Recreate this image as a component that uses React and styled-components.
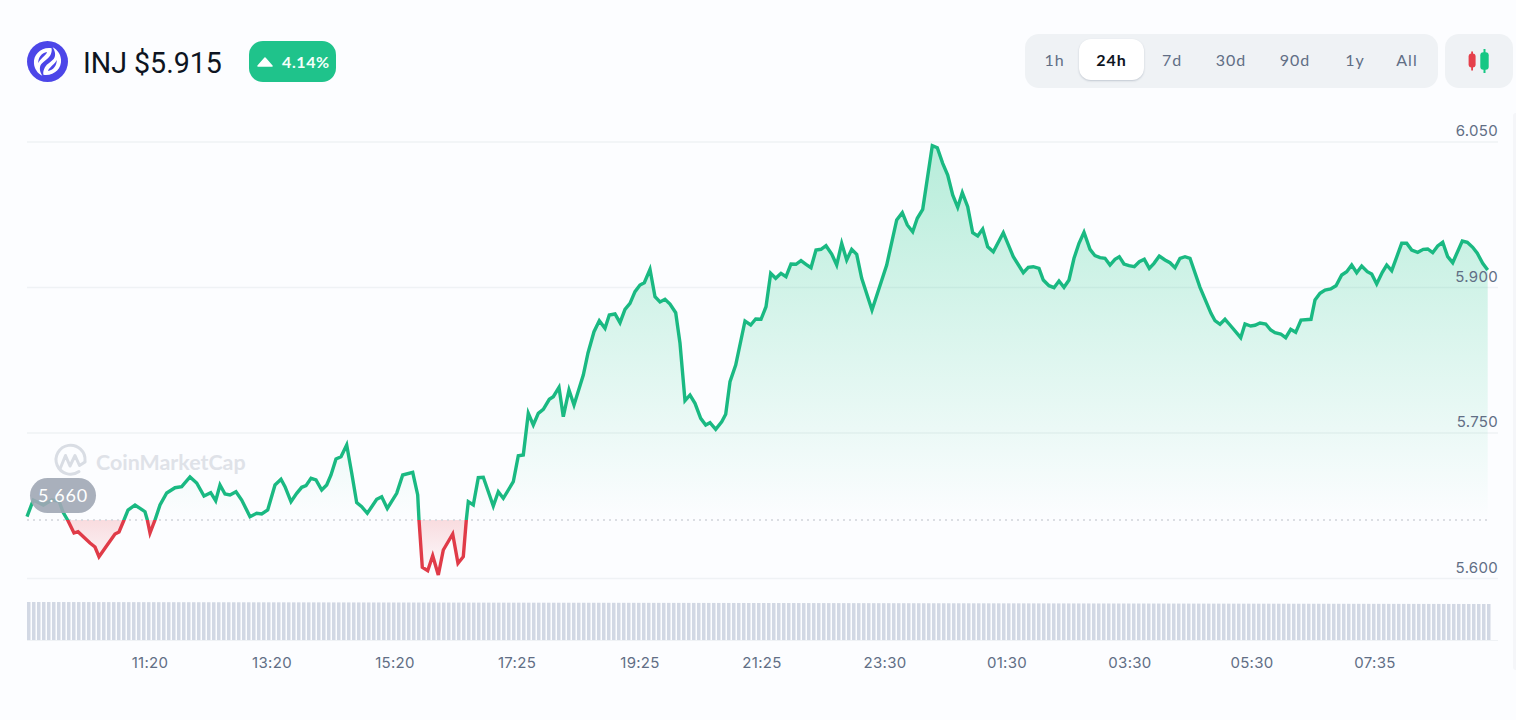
import React from "react";
import styled, { createGlobalStyle } from "styled-components";

const GlobalStyle = createGlobalStyle`
  body {
    margin: 0;
    background: #fcfdff;
    font-family: "Inter", "Liberation Sans", sans-serif;
  }
`;

// price line, traced from the chart (page coordinates)
const LINE = [
  [27, 516.7], [33.3, 500], [43.3, 505], [51.7, 500], [59, 501], [63, 512], [68, 520.7],
  [74, 533], [78, 531.7], [90, 543], [95, 547], [99, 556.7], [106, 546.7], [115, 534], [119, 532], [124, 520],
  [128, 510], [135, 505], [145, 511.7], [147.3, 520], [150, 533], [155, 520],
  [160, 505], [166.7, 493], [175, 487.7], [181.7, 486.7], [190, 477], [196.7, 483], [204, 496], [210.7, 492.7],
  [215.7, 500.7], [220, 485], [225, 494], [230, 495], [236, 491.7], [241.7, 500], [250, 516.7], [256.7, 513.3],
  [261.7, 514], [267.7, 510], [275, 485], [281, 479.3], [285, 486.7], [291, 501.7], [296.7, 493.3], [301.7, 487.3],
  [306, 485.7], [311, 478.3], [316, 480], [321.7, 490], [326.7, 485], [331, 475], [336, 459], [341, 456.7],
  [346.7, 445], [351.7, 473], [356.7, 502.7], [361.7, 506.7], [367.3, 513.3], [376.7, 499.3], [381.7, 496.7],
  [387.3, 508.5], [396.7, 493.3], [402.7, 475], [412.7, 472.3], [417.7, 495], [419, 520],
  [422.3, 567.3], [427.7, 570.7], [432.7, 555.7], [438.3, 575], [443.3, 550], [452.7, 534], [458, 563.3], [463.3, 556.7], [466.3, 520],
  [468.3, 501.7], [473.3, 505], [478.3, 477.7], [483.3, 477.3], [493.3, 506], [498.3, 491.7], [503.3, 498.3],
  [513.3, 481.7], [518.3, 455.7], [523.3, 455], [528.3, 413.3], [533.3, 425], [538.3, 413.3], [543.3, 409.3],
  [549.3, 399.3], [553.3, 396.7], [559, 387.3], [563.3, 416.7], [569, 390], [574, 405], [583.3, 375], [588, 353],
  [594, 331.7], [599.3, 320.7], [605, 328.3], [609.3, 315], [615, 314], [620, 322.7], [625, 309.3], [630, 303.3],
  [635, 291.7], [640, 285], [644.3, 282.7], [650, 269.3], [655, 296.7], [660, 302], [665, 299.3], [670, 304],
  [675.7, 312.7], [680, 343.3], [685, 400.7], [690, 395], [695, 403.3], [700.7, 418.3], [705.7, 425], [710, 422.7],
  [715.7, 429.3], [721.7, 421.7], [725.7, 414.3], [730, 381.7], [735.7, 365], [745, 321], [750.7, 325], [755.7, 319],
  [761, 319.3], [766, 306.7], [770.7, 273.3], [775.7, 278.3], [781, 273.3], [786, 276.7], [791, 264], [796, 264.3],
  [801, 260.7], [806, 264.3], [811, 267.7], [816, 250], [821, 249.3], [826, 245.7], [831.7, 254], [836.7, 265],
  [841.7, 243.3], [846.7, 260], [851.7, 249.3], [856.7, 254.3], [861.7, 278.3], [872, 310], [886.7, 265], [896.7, 220],
  [902.3, 212.7], [907.3, 225], [912.7, 231.7], [917.3, 218.3], [922.7, 209.3], [932.3, 145.7], [937.3, 147.7],
  [942.7, 163.3], [947.7, 175], [952.7, 195], [957.7, 207.3], [962.3, 192.7], [967.7, 206.7], [972.7, 232.7],
  [977.7, 236], [982.7, 229], [987.7, 246.7], [993.3, 251.7], [1003.3, 232.7], [1013.3, 256.7], [1023.3, 272.7],
  [1028.3, 267.3], [1033.3, 266.7], [1039, 268.3], [1043.3, 280], [1049, 285.7], [1054, 287.7], [1059, 281],
  [1064, 287.3], [1069, 280], [1074, 258.3], [1079, 243.3], [1084, 232.3], [1090, 249.3], [1095, 255.7], [1100, 257.7],
  [1105, 258.3], [1110, 265], [1115, 259.3], [1119.3, 256.7], [1124, 264], [1129, 265.7], [1134.3, 266.7], [1139.3, 261.7],
  [1144.3, 259.3], [1149.3, 268.3], [1154, 263.3], [1159.3, 256], [1165, 260], [1170, 262.7], [1175, 267.7], [1180, 258.3],
  [1185, 256.7], [1190, 258.3], [1200, 287.3], [1211, 313.3], [1215, 320.7], [1220, 324.3], [1225, 319.3], [1230, 325],
  [1240.7, 337.7], [1245, 324], [1250.7, 326], [1255, 325.3], [1260, 323], [1265.7, 324], [1270.7, 330], [1275, 332.7],
  [1280.7, 334], [1285.7, 337.7], [1290.7, 329.3], [1295.7, 332.3], [1301, 320], [1311, 319.3], [1315, 300], [1320, 293.3],
  [1325, 290], [1330.7, 289], [1336, 285.7], [1341.7, 275], [1346.7, 271.7], [1351.7, 265], [1356.7, 272.7], [1361.7, 266],
  [1367.3, 271.7], [1371.7, 274], [1376.7, 284], [1382.3, 272.3], [1386.7, 265], [1391.7, 270.7], [1401.7, 243.3],
  [1406.7, 243.3], [1411.7, 250], [1417.7, 252.3], [1423.3, 249.3], [1427.7, 249], [1432.7, 252.7], [1437.7, 246],
  [1442.7, 242.3], [1447.7, 256.7], [1452.7, 262.7], [1462.3, 241], [1467.3, 242.3], [1472.7, 247.3], [1477.3, 253.3],
  [1482.7, 263.3], [1487.7, 270],
];

const BASE = 520;
const linePoints = LINE.map((p) => p.join(",")).join(" ");
const areaPoints = `27,${BASE} ${linePoints} 1487.7,${BASE}`;

const SWOOSH =
  "M24 7C14 5.500 6 13 6.800 22 7.200 27 10 31.500 15 34 12.500 30 11.500 26 14 22.500 16.500 19.500 20.500 18 22.500 14.500 23.800 12 24.500 9.500 24 7zM19.500 10.800C14.500 11.500 10.800 16 11 21.500 12.500 18.500 15 16.500 17 14.500 18.300 13.200 19.200 12.200 19.500 10.800z";

const TABS = [
  { label: "1h", width: 49 },
  { label: "24h", width: 65, active: true },
  { label: "7d", width: 56 },
  { label: "30d", width: 62 },
  { label: "90d", width: 66 },
  { label: "1y", width: 54 },
  { label: "All", width: 50 },
];

const GRID = [
  { y: 142, label: "6.050" },
  { y: 287.5, label: "5.900" },
  { y: 433, label: "5.750" },
  { y: 578.5, label: "5.600" },
];

const TIMES = [
  [150, "11:20"], [272, "13:20"], [395, "15:20"], [517, "17:25"], [640, "19:25"], [762, "21:25"],
  [885, "23:30"], [1007, "01:30"], [1130, "03:30"], [1252, "05:30"], [1375, "07:35"],
];

const VOLUME = Array.from({ length: 293 }, (_, i) => 27 + i * 5);

const Page = styled.div`
  position: relative;
  width: 1516px;
  height: 720px;
  overflow: hidden;
  background: #fcfdff;
`;

const Header = styled.header`
  display: flex;
  justify-content: space-between;
  align-items: flex-start;
  padding: 34px 3px 0 27px;
`;

const Coin = styled.div`
  display: flex;
  align-items: center;
  margin-top: 7px;
`;

const Title = styled.h1`
  width: 139px;
  margin: 0 27px 0 15px;
  padding-top: 3px;
  font-family: "Roboto", "Liberation Sans", sans-serif;
  font-size: 28.6px;
  font-weight: 400;
  line-height: 38px;
  white-space: nowrap;
  color: #0d1421;
`;

const Badge = styled.div`
  display: flex;
  align-items: center;
  gap: 9px;
  width: 87px;
  height: 41px;
  box-sizing: border-box;
  padding-left: 8px;
  border-radius: 14px;
  background: #1fc38b;
  color: #f4fffa;
  font-family: "Lato", sans-serif;
  font-size: 16px;
  font-weight: 700;
  letter-spacing: 0.6px;
`;

const Controls = styled.div`
  display: flex;
  gap: 7px;
`;

const TabGroup = styled.div`
  display: flex;
  align-items: flex-start;
  height: 54px;
  box-sizing: border-box;
  padding: 5px 6px 0 5px;
  border-radius: 14px;
  background: #eff2f5;
`;

const Tab = styled.button`
  width: ${(p) => p.$width}px;
  height: 41px;
  padding: 0;
  border: none;
  border-radius: 12px;
  background: ${(p) => (p.$active ? "#fff" : "transparent")};
  box-shadow: ${(p) => (p.$active ? "0 1px 2px rgba(88,102,126,0.3)" : "none")};
  color: ${(p) => (p.$active ? "#0d1421" : "#616e85")};
  font-family: "Lato", sans-serif;
  font-size: 16px;
  font-weight: ${(p) => (p.$active ? 700 : 400)};
  letter-spacing: 1px;
`;

const CandleButton = styled.button`
  display: flex;
  align-items: center;
  justify-content: center;
  width: 68px;
  height: 54px;
  padding: 0;
  border: none;
  border-radius: 14px;
  background: #eff2f5;
`;

const Chart = styled.div`
  position: relative;
  margin-top: 22px;
`;

const ChartSvg = styled.svg`
  display: block;
  width: 1516px;
  height: 610px;
`;

const AxisText = styled.text`
  font-family: "Inter", sans-serif;
  font-size: 15px;
  letter-spacing: 0.3px;
  fill: #616e85;
`;

const Watermark = styled.text`
  font-family: "Lato", sans-serif;
  font-size: 21.4px;
  font-weight: 700;
  fill: #dfe2e8;
`;

const OpenPrice = styled.div`
  position: absolute;
  left: 30px;
  top: 368px;
  width: 66px;
  height: 35px;
  border-radius: 18px;
  background: rgba(160, 167, 181, 0.9);
  color: #fff;
  font-family: "Lato", sans-serif;
  font-size: 18px;
  line-height: 35px;
  letter-spacing: 0.8px;
  text-align: center;
`;

const EdgeCard = styled.div`
  position: absolute;
  right: 0;
  top: 113px;
  width: 3px;
  height: 557px;
  border-radius: 6px 0 0 6px;
  background: #f5f6f9;
`;

function InjLogo() {
  return (
    <svg width="41" height="41" viewBox="0 0 40 40">
      <circle cx="20" cy="20" r="20" fill="#4c46e8" />
      <path d={SWOOSH} fill="#fff" fillRule="evenodd" />
      <path d={SWOOSH} fill="#fff" fillRule="evenodd" transform="rotate(180 20 20)" />
    </svg>
  );
}

function CandleIcon() {
  return (
    <svg width="26" height="26" viewBox="0 0 26 26">
      <rect x="5.200" y="3.500" width="1.800" height="19" fill="#e5404b" />
      <rect x="2.600" y="5.500" width="7" height="14" rx="3" fill="#e5404b" />
      <rect x="17.500" y="1" width="2" height="24" fill="#16c784" />
      <rect x="14.300" y="4.200" width="8.400" height="17.600" rx="3" fill="#16c784" />
    </svg>
  );
}

export default function App() {
  return (
    <Page>
      <GlobalStyle />
      <Header>
        <Coin>
          <InjLogo />
          <Title>INJ $5.915</Title>
          <Badge>
            <svg width="16" height="10" viewBox="0 0 16 10">
              <path d="M8 1 15 9H1z" fill="#fff" stroke="#fff" strokeWidth="1.500" strokeLinejoin="round" />
            </svg>
            4.14%
          </Badge>
        </Coin>
        <Controls>
          <TabGroup>
            {TABS.map((tab) => (
              <Tab key={tab.label} $width={tab.width} $active={tab.active}>
                {tab.label}
              </Tab>
            ))}
          </TabGroup>
          <CandleButton>
            <CandleIcon />
          </CandleButton>
        </Controls>
      </Header>

      <Chart>
        <ChartSvg viewBox="0 110 1516 610">
          <defs>
            <linearGradient id="greenFill" gradientUnits="userSpaceOnUse" x1="0" y1="145" x2="0" y2={BASE}>
              <stop offset="0" stopColor="#16c784" stopOpacity="0.3" />
              <stop offset="1" stopColor="#16c784" stopOpacity="0" />
            </linearGradient>
            <linearGradient id="redFill" gradientUnits="userSpaceOnUse" x1="0" y1={BASE} x2="0" y2="575">
              <stop offset="0" stopColor="#ea3943" stopOpacity="0.17" />
              <stop offset="1" stopColor="#ea3943" stopOpacity="0" />
            </linearGradient>
            <clipPath id="above">
              <rect x="0" y="110" width="1516" height={BASE - 110} />
            </clipPath>
            <clipPath id="below">
              <rect x="0" y={BASE} width="1516" height="100" />
            </clipPath>
          </defs>

          {GRID.map((g) => (
            <line key={g.label} x1="27" x2="1498" y1={g.y} y2={g.y} stroke="#eff2f5" strokeWidth="1.500" />
          ))}

          <g>
            <path
              d="M79 471.500A14.500 14.500 0 1 1 85 461"
              fill="none"
              stroke="#d9dde4"
              strokeWidth="3"
              strokeLinecap="round"
            />
            <path
              d="M60 469 65.500 455.500 70 466 75 455.500 79.500 465.500 85 462"
              fill="none"
              stroke="#d9dde4"
              strokeWidth="3"
              strokeLinejoin="round"
              strokeLinecap="round"
            />
            <Watermark x="96" y="470">CoinMarketCap</Watermark>
          </g>

          <polygon points={areaPoints} fill="url(#greenFill)" clipPath="url(#above)" />
          <polygon points={areaPoints} fill="url(#redFill)" clipPath="url(#below)" />
          <line x1="27" x2="1490" y1={BASE} y2={BASE} stroke="#cfd3da" strokeWidth="1.500" strokeDasharray="2 4" />
          <polyline points={linePoints} fill="none" stroke="#1ab982" strokeWidth="3.400" clipPath="url(#above)" />
          <polyline points={linePoints} fill="none" stroke="#e03b48" strokeWidth="3.400" clipPath="url(#below)" />

          {GRID.map((g) => (
            <AxisText key={g.label} x="1498" y={g.y - 6} textAnchor="end">
              {g.label}
            </AxisText>
          ))}

          {VOLUME.map((x) => {
            const top = 602 + ((x - 27) / 1463) * 2;
            return <rect key={x} x={x} y={top} width="3.500" height={640 - top} fill="#d2d8e4" />;
          })}
          <line x1="27" x2="1498" y1="640.500" y2="640.500" stroke="#eff2f5" />

          {TIMES.map(([x, label]) => (
            <AxisText key={label} x={x} y="668" textAnchor="middle">
              {label}
            </AxisText>
          ))}
        </ChartSvg>
        <OpenPrice>5.660</OpenPrice>
      </Chart>
      <EdgeCard />
    </Page>
  );
}
